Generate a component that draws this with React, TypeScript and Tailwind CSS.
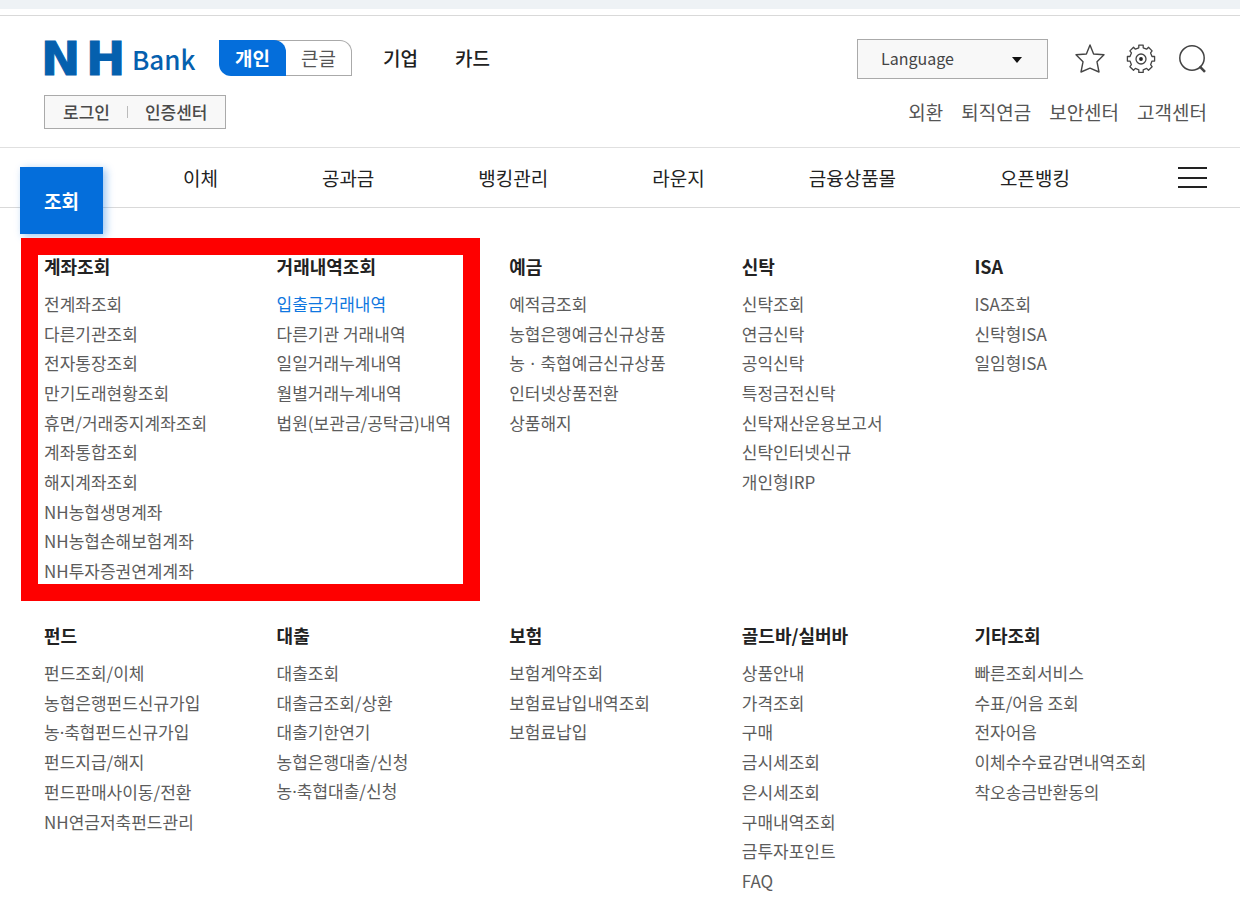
import React, { Fragment } from "react";

type Item = { label: string; active?: boolean };
type Group = { title: string; items: Item[] };

const group = (title: string, ...labels: string[]): Group => ({
  title,
  items: labels.map((label) => ({ label, active: label === "입출금거래내역" })),
});

const upperGroups: Group[] = [
  group("계좌조회", "전계좌조회", "다른기관조회", "전자통장조회", "만기도래현황조회", "휴면/거래중지계좌조회", "계좌통합조회", "해지계좌조회", "NH농협생명계좌", "NH농협손해보험계좌", "NH투자증권연계계좌"),
  group("거래내역조회", "입출금거래내역", "다른기관 거래내역", "일일거래누계내역", "월별거래누계내역", "법원(보관금/공탁금)내역"),
  group("예금", "예적금조회", "농협은행예금신규상품", "농ㆍ축협예금신규상품", "인터넷상품전환", "상품해지"),
  group("신탁", "신탁조회", "연금신탁", "공익신탁", "특정금전신탁", "신탁재산운용보고서", "신탁인터넷신규", "개인형IRP"),
  group("ISA", "ISA조회", "신탁형ISA", "일임형ISA"),
];

const lowerGroups: Group[] = [
  group("펀드", "펀드조회/이체", "농협은행펀드신규가입", "농·축협펀드신규가입", "펀드지급/해지", "펀드판매사이동/전환", "NH연금저축펀드관리"),
  group("대출", "대출조회", "대출금조회/상환", "대출기한연기", "농협은행대출/신청", "농·축협대출/신청"),
  group("보험", "보험계약조회", "보험료납입내역조회", "보험료납입"),
  group("골드바/실버바", "상품안내", "가격조회", "구매", "금시세조회", "은시세조회", "구매내역조회", "금투자포인트", "FAQ"),
  group("기타조회", "빠른조회서비스", "수표/어음 조회", "전자어음", "이체수수료감면내역조회", "착오송금반환동의"),
];

const navItems = ["이체", "공과금", "뱅킹관리", "라운지", "금융상품몰", "오픈뱅킹"];
const utilities = ["외환", "퇴직연금", "보안센터", "고객센터"];

function Logo() {
  return (
    <a href="#home" aria-label="NH Bank" className="-ml-1 block">
      <svg width="160" height="64" viewBox="0 0 160 64" fill="#0560ae" className="block">
        <g fontFamily="DejaVu Sans" fontWeight="700" fontSize="47" stroke="#0560ae" strokeWidth="1">
          <text x="1" y="48">N</text>
          <text x="46" y="48">H</text>
        </g>
        <text x="92" y="43" fontFamily="'Noto Sans CJK KR', sans-serif" fontWeight="500" fontSize="26">Bank</text>
      </svg>
    </a>
  );
}

function StarIcon() {
  return (
    <svg width="30" height="30" viewBox="0 0 30 30" fill="none" stroke="#444" strokeWidth="1.4" strokeLinejoin="round">
      <path d="M15 1 18.6 10 29 10.8 22 17.8 24 28 15 24.2 6 28 8 17.8 1 10.8 11.4 10Z" />
    </svg>
  );
}

function GearIcon() {
  return (
    <svg width="30" height="30" viewBox="0 0 30 30" fill="none" stroke="#444" strokeWidth="1.3" strokeLinejoin="round">
      <path d="M12.8 1.2h4.4v2.6l3.4 1.4 1.9-1.9 3.6 3.6-1.5 2 1.4 3.6h2.6v4.6H26l-1.4 3.6 1.5 2-3.6 3.6-1.9-1.9-3.4 1.4v2.6h-4.4v-2.6l-3.4-1.4-1.9 1.9-3.6-3.6 1.5-2L4 17.1H1.4v-4.6H4l1.4-3.6-1.5-2 3.6-3.6 1.9 1.9 3.4-1.4Z" />
      <circle cx="15" cy="15" r="5" />
      <circle cx="15" cy="15" r="1.9" fill="#222" stroke="none" />
    </svg>
  );
}

function SearchIcon() {
  return (
    <svg width="30" height="30" viewBox="0 0 30 30" fill="none" stroke="#444">
      <circle cx="15" cy="14" r="12.2" strokeWidth="1.5" />
      <path d="m22.6 22.4 5.4 5.4" strokeWidth="2.6" />
    </svg>
  );
}

/* The Latin middle dot takes a narrow glyph; the Korean font's own is nearly twice as wide. */
function Label({ text }: { text: string }) {
  return (
    <>
      {text.split("·").map((part, i) => (
        <Fragment key={i}>
          {i > 0 && <span className="font-['Noto_Sans',sans-serif]">·</span>}
          {part}
        </Fragment>
      ))}
    </>
  );
}

function MenuGroup({ data, rows }: { data: Group; rows: string }) {
  return (
    <section>
      <h2 className="text-[18px] leading-7 font-bold whitespace-nowrap text-[#222]">{data.title}</h2>
      <ul className={`mt-[9px] grid ${rows}`}>
        {data.items.map((item) => (
          <li key={item.label} className="flex items-center">
            <a
              href="#menu"
              className={`block text-[17px] leading-6 whitespace-nowrap ${item.active ? "text-[#0f77e0]" : "text-[#5c5c5c]"}`}
            >
              <Label text={item.label} />
            </a>
          </li>
        ))}
      </ul>
    </section>
  );
}

export default function App() {
  return (
    <div className="bg-white font-['Noto_Sans_CJK_KR',sans-serif] text-[#333]">
      <div className="h-[9px] bg-[#eef2f5]" />
      <header className="mt-[6px] border-t border-b border-t-[#d9d9d9] border-b-[#e0e0e0] pt-[23px] pr-[33px] pb-[18px] pl-11">
        <div className="flex h-10 items-center">
          <Logo />
          <nav aria-label="서비스 구분" className="ml-[19px] flex items-center pb-[2px] text-[19px] leading-6">
            <a
              href="#personal"
              className="z-10 flex h-9 w-[67px] items-center justify-center rounded-tr-xl rounded-bl-xl bg-[#046edb] font-bold text-white"
            >
              개인
            </a>
            <a
              href="#large"
              className="-ml-3 flex h-9 w-[78px] items-center justify-center rounded-tr-xl border border-l-0 border-[#aaa] pl-3 text-[#555]"
            >
              큰글
            </a>
            <a href="#business" className="ml-[31px] font-medium text-[#222]">기업</a>
            <a href="#card" className="ml-[37px] font-medium text-[#222]">카드</a>
          </nav>
          <div className="ml-auto flex items-center">
            <div className="relative">
              <select
                aria-label="Language"
                className="block h-10 w-[191px] appearance-none border border-[#aaa] bg-[#f8f8f8] pb-[2px] pl-[23px] text-[16px] text-[#444]"
              >
                <option>Language</option>
              </select>
              <svg width="10" height="6" viewBox="0 0 10 6" className="pointer-events-none absolute top-[18px] right-[26px]">
                <path d="M0 0h10L5 6Z" fill="#111" />
              </svg>
            </div>
            <div className="ml-[27px] flex gap-[21px]">
              <button type="button" aria-label="즐겨찾기"><StarIcon /></button>
              <button type="button" aria-label="설정"><GearIcon /></button>
              <button type="button" aria-label="검색"><SearchIcon /></button>
            </div>
          </div>
        </div>
        <div className="mt-4 flex items-center justify-between">
          <div className="flex h-[34px] items-center border border-[#aaa] bg-[#f8f8f8] px-[18px] text-[17px] leading-6 font-medium text-[#4a4a4a]">
            <a href="#login">로그인</a>
            <span className="mx-[17px] h-3 w-px bg-[#bbb]" />
            <a href="#cert">인증센터</a>
          </div>
          <div className="flex gap-[18px] text-[19px] leading-6 text-[#555]">
            {utilities.map((label) => (
              <a key={label} href="#util">{label}</a>
            ))}
          </div>
        </div>
      </header>

      <nav
        aria-label="주 메뉴"
        className="flex h-[60px] items-center justify-between border-b border-[#d9d9d9] pr-[33px] pl-11 text-[19px] leading-6 text-[#222]"
      >
        <a
          href="#inquiry"
          className="relative -mx-6 mt-[19px] flex h-[67px] items-center self-start bg-[#046edb] px-6 font-bold text-white shadow-[3px_2px_8px_rgba(4,110,219,0.4)]"
        >
          조회
        </a>
        {navItems.map((label) => (
          <a key={label} href="#nav">{label}</a>
        ))}
        <button type="button" aria-label="전체메뉴" className="pl-1">
          <svg width="29" height="24" viewBox="0 0 29 24" stroke="#222" strokeWidth="2" className="block">
            <path d="M0 2h29M0 12h29M0 21h29" />
          </svg>
        </button>
      </nav>

      <main className="relative pt-11 pr-[33px] pb-4 pl-11">
        <div className="pointer-events-none absolute top-[30px] left-[21px] h-[363px] w-[459px] border-[17px] border-[#fe0000]" />
        <div className="grid grid-cols-5">
          {upperGroups.map((g) => (
            <MenuGroup key={g.title} data={g} rows="min-h-[297px] grid-rows-10" />
          ))}
        </div>
        <div className="mt-[35px] grid grid-cols-5">
          {lowerGroups.map((g) => (
            <MenuGroup key={g.title} data={g} rows="min-h-[238px] grid-rows-8" />
          ))}
        </div>
      </main>
    </div>
  );
}
